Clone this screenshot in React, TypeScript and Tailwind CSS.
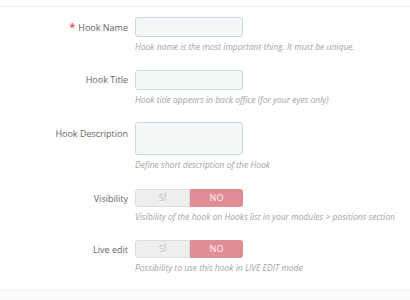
const font = { fontFamily: '"Open Sans", "Liberation Sans", sans-serif' };

function Row({
  label,
  required,
  help,
  children,
  className,
  labelPad,
}: {
  label: string;
  required?: boolean;
  help: string;
  children: React.ReactNode;
  className?: string;
  labelPad?: string;
}) {
  return (
    <div className={`flex ${className ?? ""}`}>
      <div className={`w-[128px] shrink-0 text-right text-[9px] leading-[20px] text-[#666] ${labelPad ?? ""}`}>
        {required && <span className="mr-[3px] text-[11px] text-[#e3262a]">*</span>}
        {label}
      </div>
      <div className="ml-[7px] flex-1">
        {children}
        <p className="mt-[3px] text-[8.5px] italic leading-[13px] text-[#a3a3a3] whitespace-nowrap">
          {help}
        </p>
      </div>
    </div>
  );
}

function Switch() {
  return (
    <div className="flex h-[18px] w-[108px] text-[9px] leading-[18px]">
      <div className="flex-1 rounded-l-[3px] border border-[#dcdcdc] bg-[#eeeeee] text-center leading-[16px] text-[#c4c4c4]">
        SÍ
      </div>
      <div className="flex-1 rounded-r-[3px] bg-[#e08e95] text-center text-[#fdf3f4]">
        NO
      </div>
    </div>
  );
}

export default function App() {
  return (
    <div className="w-[410px] h-[300px] bg-white overflow-hidden" style={font}>
      <div className="mt-[6px] h-px bg-[#eeeeee]" />
      <div className="pt-[10px]">
        <Row label="Hook Name" required help="Hook name is the most important thing. It must be unique." className="mb-[17px]">
          <input className="block h-[20px] w-[108px] rounded-[3px] border border-[#c9d9de] bg-[#f5f8f9]" />
        </Row>
        <Row label="Hook Title" help="Hook title appears in back office (for your eyes only)" className="mb-[16px]">
          <input className="block h-[20px] w-[108px] rounded-[3px] border border-[#c9d9de] bg-[#f5f8f9]" />
        </Row>
        <Row label="Hook Description" help="Define short description of the Hook" className="mb-[18px]" labelPad="pt-[2px]">
          <textarea className="block h-[33px] w-[108px] resize-none rounded-[3px] border border-[#c9d9de] bg-[#f5f8f9]" />
        </Row>
        <div className="mb-[17px]">
          <Row label="Visibility" help="Visibility of the hook on Hooks list in your modules > positions section">
            <Switch />
          </Row>
        </div>
        <Row label="Live edit" help="Possibility to use this hook in LIVE EDIT mode">
          <Switch />
        </Row>
      </div>
      <div className="mt-[16px] h-px bg-[#eef1f3]" />
      <div className="h-[20px] bg-[#fafbfc]" />
    </div>
  );
}
